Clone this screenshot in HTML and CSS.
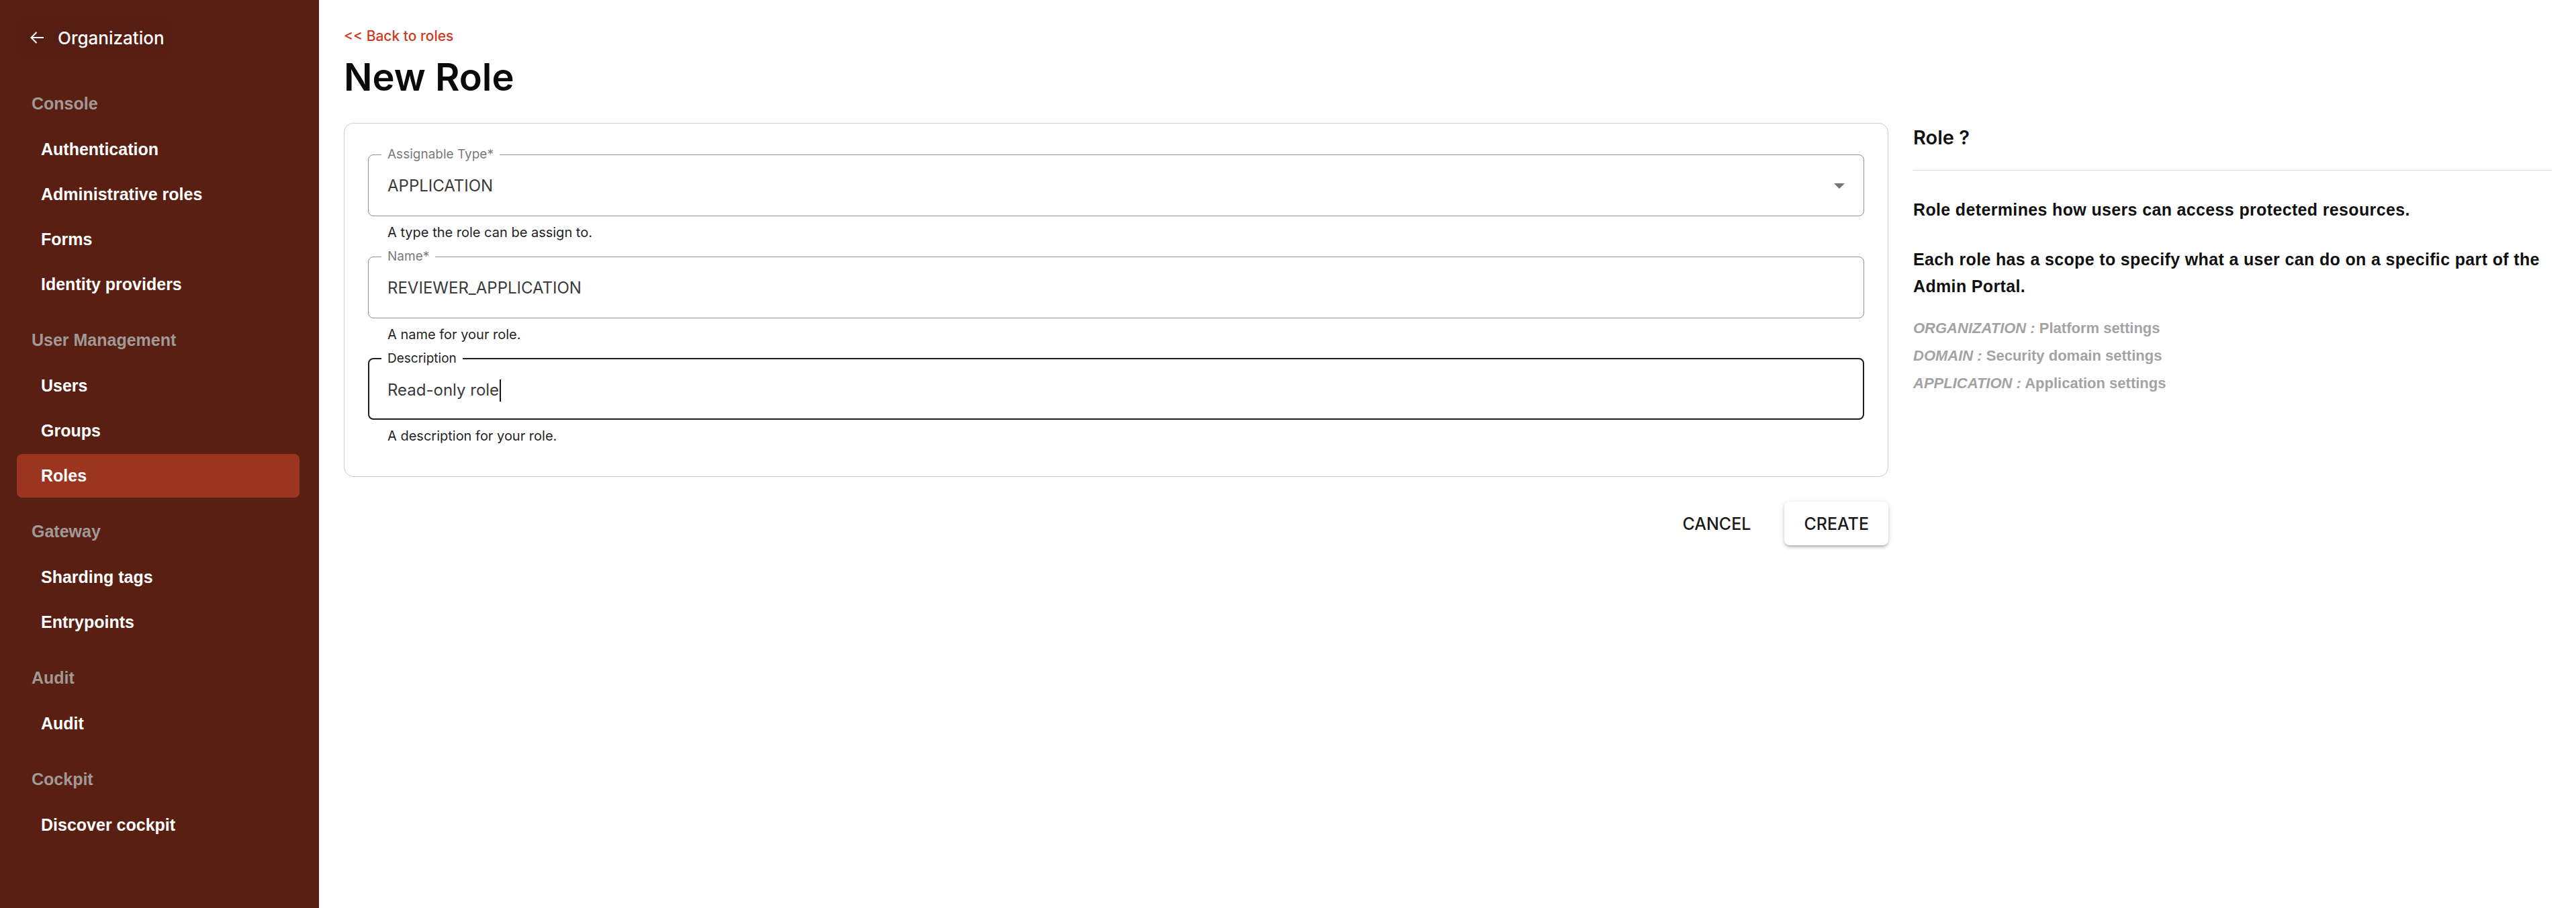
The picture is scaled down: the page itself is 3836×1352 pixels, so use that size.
FILE: index.html
```html
<!DOCTYPE html>
<html lang="en">
<head>
<meta charset="utf-8">
<title>New Role</title>
<link rel="stylesheet" href="styles.css">
</head>
<body>
<div class="app">
  <aside class="sidebar">
    <div class="org">
      <svg class="org-arrow" width="22" height="20" viewBox="0 0 22 20" aria-hidden="true"><path d="M21 10H2.5M10.5 2L2.5 10l8 8" fill="none" stroke="#fff" stroke-width="2"/></svg>
      <span>Organization</span>
    </div>
    <nav class="nav">
      <div class="section">
        <div class="section-title">Console</div>
        <a class="item">Authentication</a>
        <a class="item">Administrative roles</a>
        <a class="item">Forms</a>
        <a class="item">Identity providers</a>
      </div>
      <div class="section">
        <div class="section-title">User Management</div>
        <a class="item">Users</a>
        <a class="item">Groups</a>
        <a class="item active">Roles</a>
      </div>
      <div class="section">
        <div class="section-title">Gateway</div>
        <a class="item">Sharding tags</a>
        <a class="item">Entrypoints</a>
      </div>
      <div class="section">
        <div class="section-title">Audit</div>
        <a class="item">Audit</a>
      </div>
      <div class="section">
        <div class="section-title">Cockpit</div>
        <a class="item">Discover cockpit</a>
      </div>
    </nav>
  </aside>

  <main class="main">
    <a class="back">&lt;&lt; Back to roles</a>
    <h1 class="title">New Role</h1>
    <div class="layout">
      <div class="form-col">
        <div class="card">
          <div class="field">
            <fieldset class="outline">
              <legend>Assignable Type*</legend>
              <div class="value select-value"><span>APPLICATION</span><span class="select-arrow"></span></div>
            </fieldset>
            <div class="hint">A type the role can be assign to.</div>
          </div>
          <div class="field">
            <fieldset class="outline">
              <legend>Name*</legend>
              <div class="value">REVIEWER_APPLICATION</div>
            </fieldset>
            <div class="hint">A name for your role.</div>
          </div>
          <div class="field">
            <fieldset class="outline focused">
              <legend>Description</legend>
              <div class="value">Read-only role<span class="caret"></span></div>
            </fieldset>
            <div class="hint">A description for your role.</div>
          </div>
        </div>
        <div class="actions">
          <button class="btn">CANCEL</button>
          <button class="btn raised">CREATE</button>
        </div>
      </div>

      <aside class="help">
        <h3 class="help-title">Role ?</h3>
        <p class="help-text">Role determines how users can access protected resources.</p>
        <p class="help-text">Each role has a scope to specify what a user can do on a specific part of the Admin Portal.</p>
        <ul class="scopes">
          <li><em>ORGANIZATION :</em> Platform settings</li>
          <li><em>DOMAIN :</em> Security domain settings</li>
          <li><em>APPLICATION :</em> Application settings</li>
        </ul>
      </aside>
    </div>
  </main>
</div>
</body>
</html>
```

FILE: styles.css
```css
html, body {
  margin: 0;
  padding: 0;
  background: #ffffff;
}

.app {
  display: flex;
  min-height: 1352px;
}

/* ---------- Sidebar ---------- */
.sidebar {
  width: 475px;
  flex-shrink: 0;
  background: #5a1f13;
  padding-top: 25px;
  box-sizing: border-box;
  font-family: "Liberation Sans", Arial, sans-serif;
}

.org {
  margin-left: 25px;
  width: 230px;
  height: 62px;
  box-sizing: border-box;
  padding-left: 19px;
  display: flex;
  align-items: center;
  gap: 20px;
  background: rgba(0, 0, 0, 0.035);
  border-radius: 8px;
  color: #ffffff;
  font-family: Inter, "Liberation Sans", sans-serif;
  font-weight: 500;
  font-size: 26px;
}

.org-arrow {
  flex-shrink: 0;
}

.nav {
  padding-top: 19px;
}

.section {
  padding-top: 13px;
}

.section-title {
  height: 71px;
  line-height: 71px;
  padding-left: 47px;
  color: #a19996;
  font-weight: 700;
  font-size: 25px;
}

.item {
  display: block;
  height: 65px;
  line-height: 65px;
  margin: 0 29px 2px 25px;
  padding-left: 36px;
  border-radius: 8px;
  color: #ffffff;
  font-weight: 700;
  font-size: 25px;
  text-decoration: none;
}

.item.active {
  background: #9c3520;
}

/* ---------- Main ---------- */
.main {
  flex: 1;
  padding: 39px 36px 0 37px;
  font-family: Inter, "Liberation Sans", sans-serif;
  color: #111111;
}

.back {
  display: block;
  font-size: 21px;
  line-height: 30px;
  font-weight: 500;
  color: #d0391e;
  text-decoration: none;
}

.title {
  margin: 14px 0 36px;
  font-size: 56px;
  line-height: 64px;
  font-weight: 600;
  color: #0a0a0a;
}

.layout {
  display: grid;
  grid-template-columns: 2300fr 951fr;
  column-gap: 37px;
  align-items: start;
}

.card {
  border: 1px solid #d2cccc;
  border-radius: 14px;
  padding: 34px 35px 48px 35px;
}

.outline {
  margin: 0;
  padding: 15px 19px 24px 19px;
  border: 1px solid #8f8f8f;
  border-radius: 8px;
  min-width: 0;
}

.outline legend {
  padding: 0 9px;
  font-size: 19px;
  line-height: 24px;
  color: #7a7a7a;
}

.outline.focused {
  border: 2px solid #1c1c1c;
  padding: 15px 18px 22px 18px;
}

.outline.focused legend {
  color: #222222;
}

.value {
  height: 40px;
  line-height: 40px;
  padding-left: 9px;
  font-size: 24px;
  color: #3a3a3a;
  display: flex;
  align-items: center;
}

.select-value {
  justify-content: space-between;
}

.select-arrow {
  width: 0;
  height: 0;
  margin-right: 9px;
  border-left: 8.5px solid transparent;
  border-right: 8.5px solid transparent;
  border-top: 8.5px solid #757575;
}

.caret {
  display: inline-block;
  width: 2px;
  height: 33px;
  background: #111111;
  margin-left: 1px;
}

.hint {
  margin: 12px 0 12px 29px;
  font-size: 20px;
  line-height: 24px;
  color: #1f1f1f;
}

.field:last-child .hint {
  margin-bottom: 0;
}

.actions {
  margin-top: 37px;
  display: flex;
  justify-content: flex-end;
  gap: 21px;
}

.btn {
  height: 65px;
  padding: 0 29px;
  border: none;
  border-radius: 8px;
  background: transparent;
  font-family: Inter, "Liberation Sans", sans-serif;
  font-size: 25px;
  font-weight: 500;
  color: #1a1a1a;
}

.btn.raised {
  background: #ffffff;
  box-shadow: 0 3px 3px -2px rgba(0, 0, 0, 0.2), 0 3px 4px 0 rgba(0, 0, 0, 0.14), 0 1px 8px 0 rgba(0, 0, 0, 0.12);
}

/* ---------- Help panel ---------- */
.help {
  font-family: "Liberation Sans", Arial, sans-serif;
}

.help-title {
  margin: 0;
  padding: 2px 0 28px;
  border-bottom: 1px solid #dddddd;
  font-family: Inter, "Liberation Sans", sans-serif;
  font-size: 29px;
  line-height: 40px;
  font-weight: 600;
  color: #111111;
}

.help-text {
  margin: 38px 0 0;
  font-size: 25px;
  letter-spacing: 0.35px;
  line-height: 40px;
  font-weight: 700;
  color: #111111;
}

.help-text + .help-text {
  margin-top: 34px;
}

.scopes {
  list-style: none;
  margin: 22px 0 0;
  padding: 0;
  font-size: 22px;
  line-height: 41px;
  font-weight: 700;
  color: #a3a3a3;
}

.scopes em {
  font-style: italic;
}
```
